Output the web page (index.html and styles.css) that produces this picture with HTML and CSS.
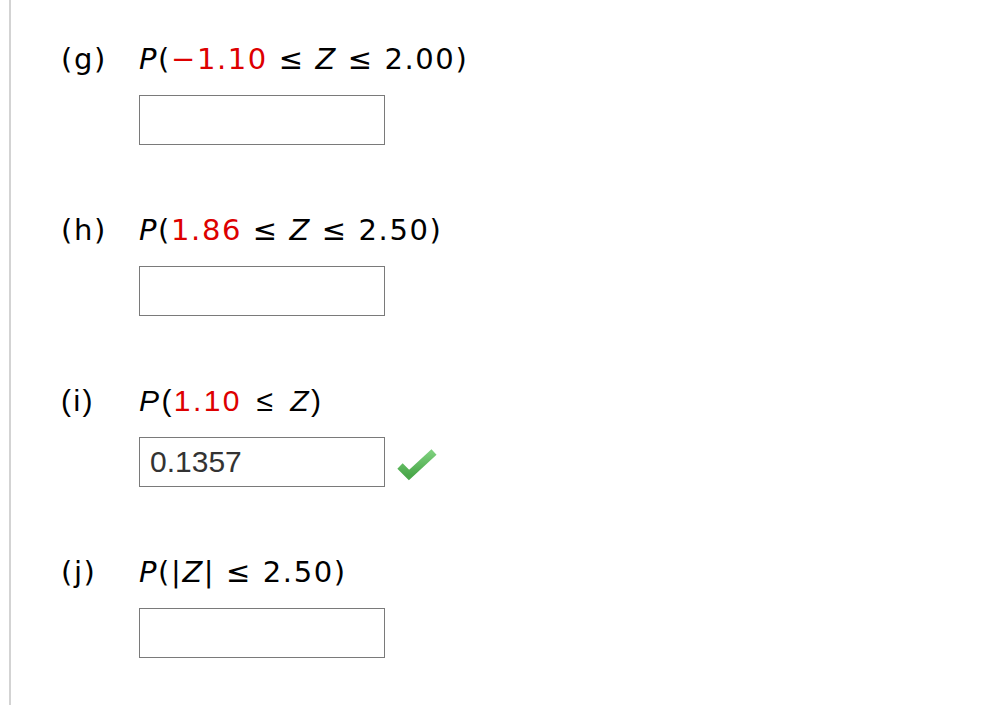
FILE: index.html
```html
<!DOCTYPE html>
<html lang="en">
<head>
  <meta charset="UTF-8" />
  <title>Normal Probabilities</title>
  <link rel="stylesheet" href="styles.css">
</head>
<body>
  <div class="question">
    <div class="part">
      <div class="label">(g)</div>
      <div class="body">
        <div class="expr"><i>P</i>(<span class="red">&minus;1.10</span> &le; <i>Z</i> &le; 2.00)</div>
        <input type="text" class="answer" />
      </div>
    </div>

    <div class="part">
      <div class="label">(h)</div>
      <div class="body">
        <div class="expr"><i>P</i>(<span class="red">1.86</span> &le; <i>Z</i> &le; 2.50)</div>
        <input type="text" class="answer" />
      </div>
    </div>

    <div class="part arial">
      <div class="label">(i)</div>
      <div class="body">
        <div class="expr"><i>P</i>(<span class="red">1.10</span> <span class="le">&le;</span> <i>Z</i>)</div>
        <div class="answer-row">
          <input type="text" class="answer" value="0.1357" />
          <svg class="check" width="40" height="34" viewBox="0 0 40 34">
            <defs>
              <linearGradient id="ok" x1="0" y1="0" x2="0" y2="1">
                <stop offset="0" stop-color="#7ccf7c" />
                <stop offset="1" stop-color="#4aa84a" />
              </linearGradient>
            </defs>
            <polyline points="3,19 12,28 37,5" fill="none" stroke="url(#ok)" stroke-width="7.5" stroke-linejoin="miter" />
          </svg>
        </div>
      </div>
    </div>

    <div class="part">
      <div class="label">(j)</div>
      <div class="body">
        <div class="expr"><i>P</i>(|<i>Z</i>| &le; 2.50)</div>
        <input type="text" class="answer" />
      </div>
    </div>
  </div>
</body>
</html>
```

FILE: styles.css
```css
html, body {
  margin: 0;
  height: 100%;
  overflow: hidden;
  background: #fff;
}
body {
  font-family: "DejaVu Sans", Verdana, sans-serif;
  font-size: 29px;
  line-height: 36px;
  letter-spacing: 1.6px;
  color: #000;
}
.question {
  margin-left: 9px;
  border-left: 2px solid #d3d3d3;
  height: 100%;
  box-sizing: border-box;
  padding: 41px 0 0 50px;
}
.part {
  display: flex;
  margin-bottom: 67px;
}
.label {
  width: 78px;
  flex-shrink: 0;
}
.arial {
  font-family: "Liberation Sans", Arial, sans-serif;
  font-size: 30px;
  letter-spacing: 2.4px;
}
.arial .le {
  margin: 0 4px;
}
.red {
  color: #dd0000;
}
.answer {
  display: block;
  box-sizing: border-box;
  width: 246px;
  height: 50px;
  margin-top: 18px;
  padding: 0 10px;
  border: 1px solid #7a7a7a;
  font-family: "Liberation Sans", Arial, sans-serif;
  font-size: 30px;
  letter-spacing: 0;
  color: #333;
  background: #fff;
  outline: none;
}
.answer-row {
  display: flex;
  align-items: flex-end;
}
.check {
  margin: 0 0 6px 12px;
}
```
